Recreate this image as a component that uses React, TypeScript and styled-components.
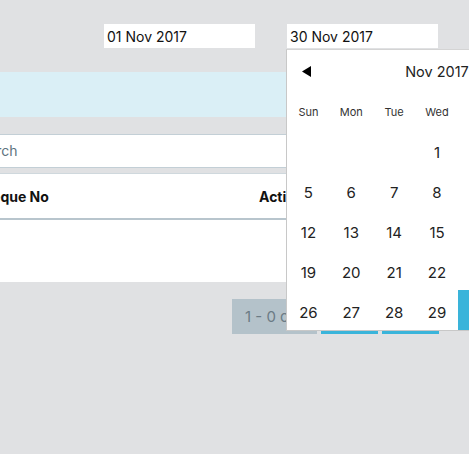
import styled, { createGlobalStyle } from "styled-components";

const GlobalStyle = createGlobalStyle`
    html, body {
        margin: 0;
        padding: 0;
        background: #e0e1e3;
        font-family: Inter, "Noto Sans", Roboto, sans-serif;
        color: #222;
    }
`;

const weekDays = ["Sun", "Mon", "Tue", "Wed", "Thu", "Fri", "Sat"];

// Nov 2017 starts on a Wednesday
const buildDays = () => {
    const cells: (number | null)[] = [null, null, null];
    for (let d = 1; d <= 30; d++) cells.push(d);
    while (cells.length % 7 !== 0) cells.push(null);
    return cells;
};

const App = () => {
    const days = buildDays();

    return (
        <Page>
            <GlobalStyle />
            <Content>
                <Toolbar>
                    <DateInput>01 Nov 2017</DateInput>
                    <PickerWrapper>
                        <DateInput>30 Nov 2017</DateInput>
                        <Calendar>
                            <CalendarHeader>
                                <NavArrow>
                                    <svg width="9" height="11" viewBox="0 0 9 11">
                                        <path d="M9 0 L0 5.5 L9 11 Z" fill="#000" />
                                    </svg>
                                </NavArrow>
                                <MonthTitle>Nov 2017</MonthTitle>
                                <NavArrow>
                                    <svg width="9" height="11" viewBox="0 0 9 11">
                                        <path d="M0 0 L9 5.5 L0 11 Z" fill="#000" />
                                    </svg>
                                </NavArrow>
                            </CalendarHeader>
                            <DayGrid>
                                {weekDays.map((w) => (
                                    <WeekDay key={w}>{w}</WeekDay>
                                ))}
                                {days.map((d, i) => (
                                    <DayCell key={i} selected={d === 30}>
                                        {d ?? ""}
                                    </DayCell>
                                ))}
                            </DayGrid>
                        </Calendar>
                    </PickerWrapper>
                </Toolbar>

                <InfoBand />

                <SearchBox>Search</SearchBox>

                <Table>
                    <HeaderRow>
                        <HeaderCell>Cheque No</HeaderCell>
                        <HeaderCell>Action</HeaderCell>
                    </HeaderRow>
                    <Body />
                </Table>

                <Pagination>
                    <PageInfo>1 - 0 of 0</PageInfo>
                    <PageButton>Prev</PageButton>
                    <PageButton>Next</PageButton>
                </Pagination>
            </Content>
        </Page>
    );
};

export default App;

const Page = styled.div`
    width: 469px;
    height: 454px;
    overflow: hidden;
    position: relative;
`;

const Content = styled.div`
    margin-left: -36px;
    width: 475px;
    display: flex;
    flex-direction: column;
`;

const Toolbar = styled.div`
    display: flex;
    gap: 32px;
    padding: 24px 0 0 140px;
    position: relative;
    z-index: 5;
`;

const PickerWrapper = styled.div`
    position: relative;
`;

const DateInput = styled.div`
    width: 148px;
    height: 24px;
    background: #fff;
    font-size: 14px;
    line-height: 26px;
    padding-left: 3px;
    color: #111;
`;

const Calendar = styled.div`
    position: absolute;
    top: 25px;
    left: -1px;
    width: 300px;
    background: #fff;
    border: 1px solid #c8c8c8;
    border-top: 1px solid #d4d4d4;
`;

const CalendarHeader = styled.div`
    height: 40px;
    padding: 2px 15px 0;
    box-sizing: border-box;
    display: flex;
    align-items: center;
    justify-content: space-between;
`;

const NavArrow = styled.div`
    display: flex;
    align-items: center;
    width: 9px;
`;

const MonthTitle = styled.div`
    font-size: 14.5px;
    color: #222;
`;

const DayGrid = styled.div`
    display: grid;
    grid-template-columns: repeat(7, 1fr);
    grid-auto-rows: 40px;
`;

const WeekDay = styled.div`
    display: flex;
    align-items: center;
    justify-content: center;
    padding-top: 4px;
    box-sizing: border-box;
    font-size: 11px;
    color: #333;
`;

const DayCell = styled.div<{ selected?: boolean }>`
    display: flex;
    align-items: center;
    justify-content: center;
    padding-top: 4px;
    box-sizing: border-box;
    font-size: 15px;
    color: ${(p) => (p.selected ? "#fff" : "#222")};
    background: ${(p) => (p.selected ? "#3ab4da" : "transparent")};
`;

const InfoBand = styled.div`
    margin-top: 24px;
    height: 45px;
    background: #daeff6;
`;

const SearchBox = styled.div`
    margin-top: 17px;
    height: 32px;
    background: #fff;
    border: 1px solid #c3cfd6;
    padding-left: 6px;
    font-size: 14px;
    line-height: 32px;
    color: #5e7380;
`;

const Table = styled.div`
    margin-top: 5px;
    background: #fff;
    border-top: 1px solid #cfd8dd;
`;

const HeaderRow = styled.div`
    height: 44px;
    display: grid;
    grid-template-columns: 286px 1fr;
    align-items: center;
    border-bottom: 2px solid #b8c5cd;
`;

const HeaderCell = styled.div`
    font-size: 14px;
    font-weight: 700;
    color: #111;
    padding-left: 9px;
`;

const Body = styled.div`
    height: 62px;
`;

const Pagination = styled.div`
    margin-top: 17px;
    display: flex;
    justify-content: flex-end;
    gap: 4px;
`;

const PageInfo = styled.div`
    width: 72px;
    height: 35px;
    background: #b4c2ca;
    color: #6b7b85;
    font-size: 15px;
    line-height: 35px;
    padding-left: 13px;
    white-space: nowrap;
    overflow: hidden;
`;

const PageButton = styled.div`
    width: 57px;
    height: 35px;
    background: #3ab4da;
    color: #fff;
    font-size: 14px;
    line-height: 35px;
    text-align: center;
`;
